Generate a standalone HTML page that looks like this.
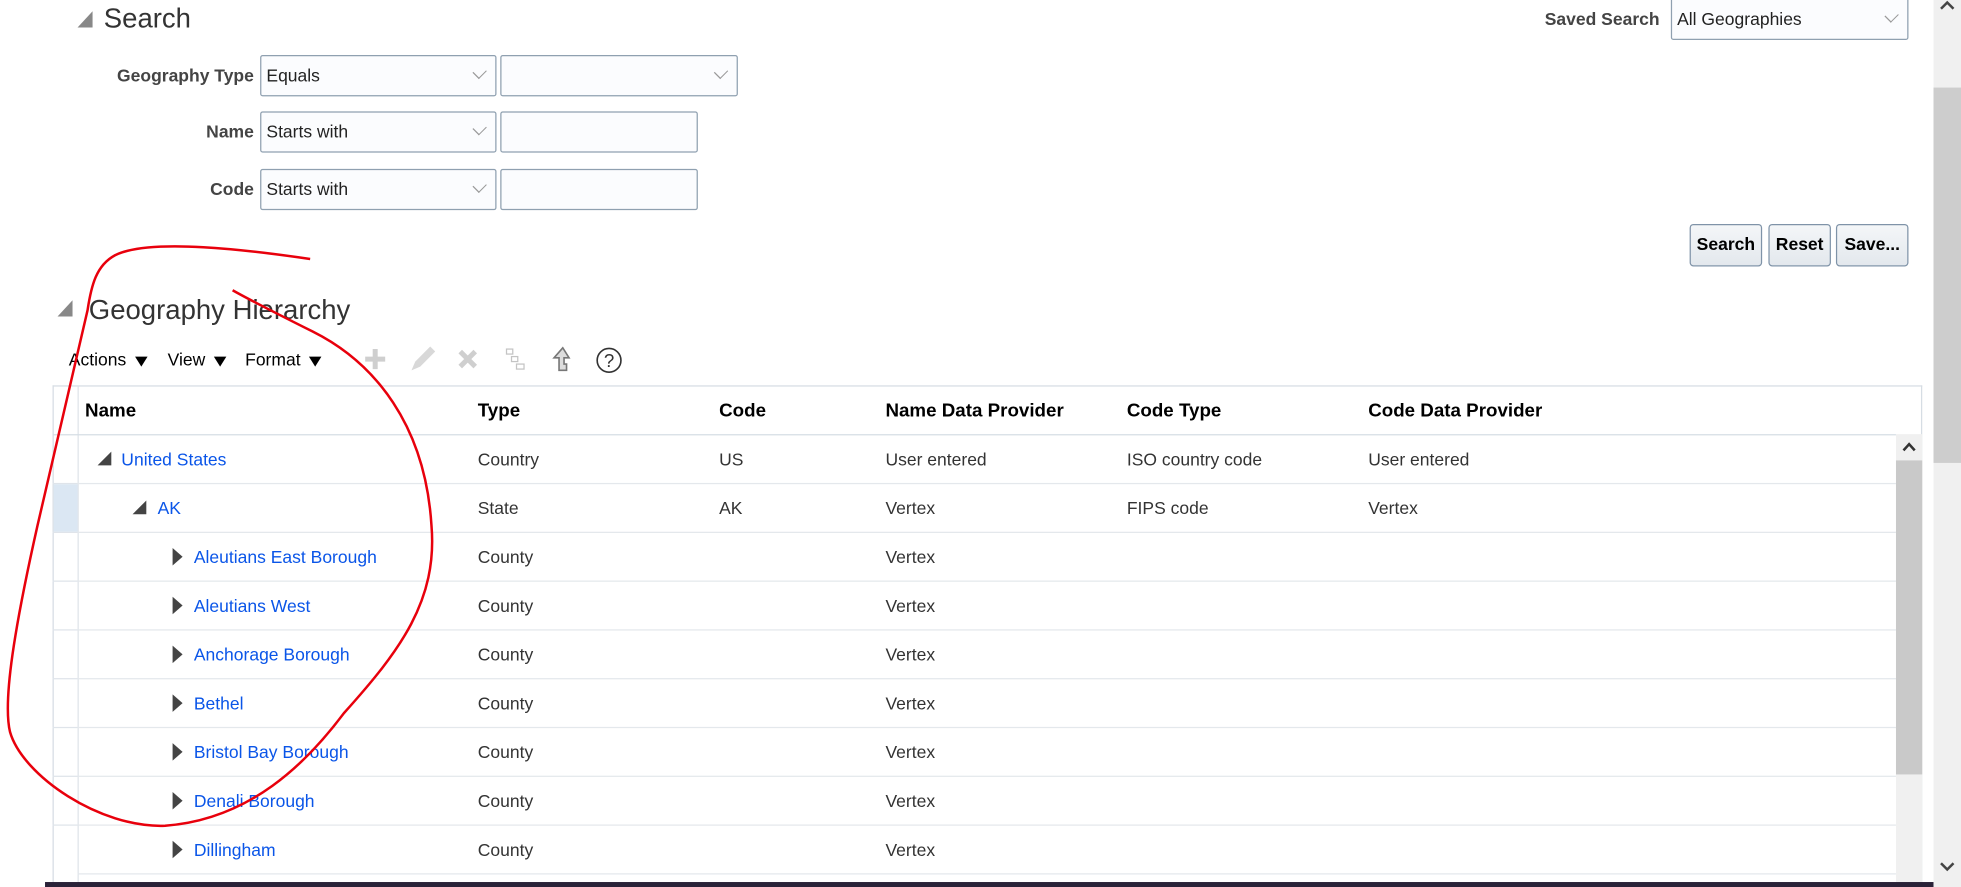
<!DOCTYPE html>
<html><head><meta charset="utf-8"><style>
html,body{margin:0;padding:0;background:#fff;overflow:hidden;width:1961px;height:887px}
#w{position:absolute;left:0;top:0;width:1568px;height:709px;overflow:hidden;transform:scale(1.25064,1.2511);transform-origin:0 0;font-family:"Liberation Sans",Arial,sans-serif;color:#333}
.a{position:absolute;white-space:nowrap}
.lbl{font-size:14px;font-weight:bold;color:#444;text-align:right}
.sel{position:absolute;box-sizing:border-box;border:1px solid #8fa0b0;border-radius:2px;background:#fbfcfe;font-size:14px;color:#222;padding:7px 4px;height:33px}
.chev{position:absolute;right:8px;top:8px;width:8px;height:8px;border-right:1.3px solid #999;border-bottom:1.3px solid #999;transform:rotate(45deg) scale(.8,1)}
.btn{position:absolute;box-sizing:border-box;border:1px solid #7f93a8;border-radius:3px;background:linear-gradient(#f4f6f8,#e3e8ed);font-size:14px;font-weight:bold;color:#000;text-align:center;line-height:31px;height:34px}
.h{font-size:22px;color:#333}
.tri{position:absolute;width:0;height:0;border-left:12px solid transparent;border-bottom:13px solid #888}
.th{position:absolute;font-size:15px;font-weight:bold;color:#000;top:320px}
.row{position:absolute;left:62px;width:1454px;height:39px;border-bottom:1px solid #e4e8ec}
.c{position:absolute;font-size:14px;color:#333;top:12px}
.l{color:#0a55e8}
.tb{position:absolute;top:279px;font-size:14px;color:#000}
.dd{display:inline-block;width:0;height:0;border-left:5px solid transparent;border-right:5px solid transparent;border-top:8px solid #000;margin-left:7px;vertical-align:-1px}
.rt{position:absolute;width:0;height:0;border-top:7px solid transparent;border-bottom:7px solid transparent;border-left:8px solid #444;top:13px}
.dt{position:absolute;width:0;height:0;border-left:11px solid transparent;border-bottom:11px solid #444;top:14px}
</style></head><body><div id="w">

<div class="tri" style="left:62px;top:9px"></div>
<div class="a h" style="left:83px;top:2px">Search</div>

<div class="a lbl" style="right:1365px;top:52px">Geography Type</div>
<div class="sel" style="left:208px;top:44px;width:189px">Equals<div class="chev"></div></div>
<div class="sel" style="left:400px;top:44px;width:190px"><div class="chev"></div></div>
<div class="a lbl" style="right:1365px;top:97px">Name</div>
<div class="sel" style="left:208px;top:89px;width:189px">Starts with<div class="chev"></div></div>
<div class="sel" style="left:400px;top:89px;width:158px"></div>
<div class="a lbl" style="right:1365px;top:143px">Code</div>
<div class="sel" style="left:208px;top:135px;width:189px">Starts with<div class="chev"></div></div>
<div class="sel" style="left:400px;top:135px;width:158px"></div>

<div class="a lbl" style="right:241px;top:7px">Saved Search</div>
<div class="sel" style="left:1336px;top:-3px;width:190px;height:35px;padding-top:9px">All Geographies<div class="chev" style="top:10px"></div></div>

<div class="btn" style="left:1351px;top:179px;width:58px">Search</div>
<div class="btn" style="left:1414px;top:179px;width:50px">Reset</div>
<div class="btn" style="left:1468px;top:179px;width:58px">Save...</div>

<div class="tri" style="left:46px;top:240px"></div>
<div class="a h" style="left:71px;top:235px">Geography Hierarchy</div>

<div class="tb" style="left:55px">Actions<span class="dd"></span></div>
<div class="tb" style="left:134px">View<span class="dd"></span></div>
<div class="tb" style="left:196px">Format<span class="dd"></span></div>
<svg class="a" style="left:285px;top:274px;z-index:2" width="220" height="28" viewBox="0 0 220 28">
<path d="M15 5v16M7 13h16" stroke="#cfcfcf" stroke-width="4"/>
<path d="M44 22l3-7 12-12 4 4-12 12z" fill="#d8d8d8"/>
<path d="M83 7l12 12M95 7L83 19" stroke="#cfcfcf" stroke-width="4"/>
<g fill="none" stroke="#c4c4c4" stroke-width="1"><rect x="120" y="5" width="5" height="4"/><rect x="124" y="11" width="5" height="4"/><rect x="128" y="17" width="6" height="4"/></g>
<path d="M165 4l-7 8h4v10h6v-5h-2v-5h4z" fill="#ddd" stroke="#777" stroke-width="1.3"/>
<circle cx="202" cy="14" r="9.5" fill="none" stroke="#333" stroke-width="1.3"/>
<text x="202" y="19.5" font-size="15" text-anchor="middle" fill="#333" font-family="Liberation Sans">?</text>
</svg>

<div class="a" style="left:42px;top:308px;width:1495px;height:400px;border:1px solid #d6dde4;border-bottom:none;box-sizing:border-box"></div>
<div class="a" style="left:62px;top:309px;width:1px;height:400px;background:#dfe4ea"></div>
<div class="a" style="left:42px;top:347px;width:1474px;height:1px;background:#d6dde4"></div>
<div class="th" style="left:68px">Name</div>
<div class="th" style="left:382px">Type</div>
<div class="th" style="left:575px">Code</div>
<div class="th" style="left:708px">Name Data Provider</div>
<div class="th" style="left:901px">Code Type</div>
<div class="th" style="left:1094px">Code Data Provider</div>

<div class="a" style="left:43px;top:387px;width:19px;height:38px;background:#dbe7f3"></div>

<div class="row" style="top:347px"><div class="dt" style="left:16px"></div><div class="c l" style="left:35px">United States</div><div class="c" style="left:320px">Country</div><div class="c" style="left:513px">US</div><div class="c" style="left:646px">User entered</div><div class="c" style="left:839px">ISO country code</div><div class="c" style="left:1032px">User entered</div></div>
<div class="row" style="top:386px"><div class="dt" style="left:44px"></div><div class="c l" style="left:64px">AK</div><div class="c" style="left:320px">State</div><div class="c" style="left:513px">AK</div><div class="c" style="left:646px">Vertex</div><div class="c" style="left:839px">FIPS code</div><div class="c" style="left:1032px">Vertex</div></div>
<div class="row" style="top:425px"><div class="rt" style="left:76px"></div><div class="c l" style="left:93px">Aleutians East Borough</div><div class="c" style="left:320px">County</div><div class="c" style="left:646px">Vertex</div></div>
<div class="row" style="top:464px"><div class="rt" style="left:76px"></div><div class="c l" style="left:93px">Aleutians West</div><div class="c" style="left:320px">County</div><div class="c" style="left:646px">Vertex</div></div>
<div class="row" style="top:503px"><div class="rt" style="left:76px"></div><div class="c l" style="left:93px">Anchorage Borough</div><div class="c" style="left:320px">County</div><div class="c" style="left:646px">Vertex</div></div>
<div class="row" style="top:542px"><div class="rt" style="left:76px"></div><div class="c l" style="left:93px">Bethel</div><div class="c" style="left:320px">County</div><div class="c" style="left:646px">Vertex</div></div>
<div class="row" style="top:581px"><div class="rt" style="left:76px"></div><div class="c l" style="left:93px">Bristol Bay Borough</div><div class="c" style="left:320px">County</div><div class="c" style="left:646px">Vertex</div></div>
<div class="row" style="top:620px"><div class="rt" style="left:76px"></div><div class="c l" style="left:93px">Denali Borough</div><div class="c" style="left:320px">County</div><div class="c" style="left:646px">Vertex</div></div>
<div class="row" style="top:659px"><div class="rt" style="left:76px"></div><div class="c l" style="left:93px">Dillingham</div><div class="c" style="left:320px">County</div><div class="c" style="left:646px">Vertex</div></div>
<div class="a" style="left:42px;top:386px;width:20px;height:1px;background:#dfe4ea"></div>
<div class="a" style="left:42px;top:425px;width:20px;height:1px;background:#dfe4ea"></div>
<div class="a" style="left:42px;top:464px;width:20px;height:1px;background:#dfe4ea"></div>
<div class="a" style="left:42px;top:503px;width:20px;height:1px;background:#dfe4ea"></div>
<div class="a" style="left:42px;top:542px;width:20px;height:1px;background:#dfe4ea"></div>
<div class="a" style="left:42px;top:581px;width:20px;height:1px;background:#dfe4ea"></div>
<div class="a" style="left:42px;top:620px;width:20px;height:1px;background:#dfe4ea"></div>
<div class="a" style="left:42px;top:659px;width:20px;height:1px;background:#dfe4ea"></div>

<div class="a" style="left:1516px;top:347px;width:21px;height:362px;background:#f0f0f0"></div>
<div class="a" style="left:1516px;top:368px;width:21px;height:251px;background:#c9c9c9"></div>
<svg class="a" style="left:1516px;top:347px" width="21" height="20"><path d="M6 13l4.5-5 4.5 5" fill="none" stroke="#333" stroke-width="2"/></svg>

<div class="a" style="left:1546px;top:0;width:22px;height:709px;background:#f0f0f0"></div>
<div class="a" style="left:1546px;top:70px;width:22px;height:300px;background:#cdcdcd"></div>
<svg class="a" style="left:1546px;top:0" width="22" height="12"><path d="M6 7l5-5 5 5" fill="none" stroke="#444" stroke-width="2"/></svg>
<svg class="a" style="left:1546px;top:686px" width="22" height="14"><path d="M6 4l5 5 5-5" fill="none" stroke="#444" stroke-width="2"/></svg>

<div class="a" style="left:36px;top:705px;width:1510px;height:4px;background:#2a2238"></div>

<svg class="a" style="left:0;top:0;z-index:3" width="1568" height="709" viewBox="0 0 1568 709">
<path d="M248 207C200 200 120 190 92 204C77 212 73 228 70 248L30 420C12 500 2 560 8 585C18 620 80 662 132 660C200 655 245 610 275 570C320 520 350 480 345 420C340 340 300 290 250 265C220 250 200 240 186 232" fill="none" stroke="#e8000c" stroke-width="2"/>
</svg>

</div></body></html>
